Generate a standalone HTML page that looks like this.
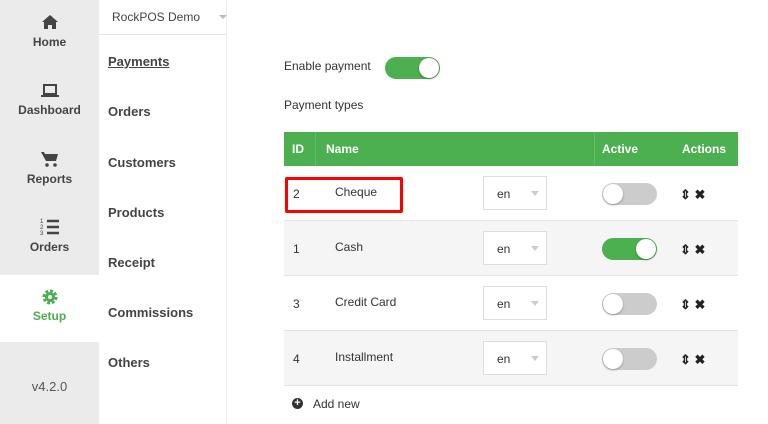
<html><head><style>
body{margin:0;width:768px;height:424px;position:relative;font-family:"Liberation Sans",sans-serif;background:#fff;overflow:hidden;color:#333}
.a{position:absolute}
.side{left:0;top:0;width:99px;height:424px;background:#ebebeb}
.ni{position:absolute;left:0;width:99px;text-align:center;font-size:12px;font-weight:bold;color:#444}
.ic{position:absolute;left:0;width:99px;text-align:center}
.col2{left:99px;top:0;width:127px;height:424px;border-right:1px solid #eee;background:#fff}
.m{position:absolute;left:9px;font-size:13px;font-weight:bold;color:#444}
.row{position:absolute;left:284px;width:454px;height:54px;border-bottom:1px solid #e4e4e4;font-size:12px}
.sel{position:absolute;left:199px;top:10px;width:64px;height:34px;border:1px solid #ddd;background:#fff;box-sizing:border-box}
.sel span{position:absolute;left:13px;top:10px;font-size:12px}
.sel i{position:absolute;left:47px;top:14px;border:4px solid transparent;border-top:5px solid #ccc;border-bottom:0}
.tg{position:absolute;left:318px;top:17px;width:55px;height:22px;border-radius:11px;background:#ccc}
.tg.on{background:#4caf50}
.tg b{position:absolute;top:1px;left:1px;width:20px;height:20px;border-radius:50%;background:#fff;box-shadow:0 1px 2px rgba(0,0,0,.3)}
.tg.on b{left:34px}
.act{position:absolute;left:396px;top:21px;font-size:13px;font-weight:bold;color:#222}
</style></head><body>
<div class="a side">
<div class="ic" style="top:14px"><svg width="18" height="16" viewBox="0 0 18 16"><path d="M9 1L1 8h2v7h4v-4h4v4h4V8h2z" fill="#444"/></svg></div>
<div class="ni" style="top:35px">Home</div>
<div class="ic" style="top:83px"><svg width="20" height="16" viewBox="0 0 20 16"><rect x="4" y="2" width="12" height="9" fill="none" stroke="#444" stroke-width="2"/><rect x="1" y="12" width="18" height="2" fill="#444"/></svg></div>
<div class="ni" style="top:103px">Dashboard</div>
<div class="ic" style="top:151px"><svg width="20" height="17" viewBox="0 0 20 17"><path d="M1 1h3l1 2h13l-2 7H6z" fill="#444"/><circle cx="7" cy="14" r="1.8" fill="#444"/><circle cx="15" cy="14" r="1.8" fill="#444"/></svg></div>
<div class="ni" style="top:172px">Reports</div>
<div class="ic" style="top:218px"><svg width="20" height="18" viewBox="0 0 20 18"><path d="M7 3h12M7 9h12M7 15h12" stroke="#444" stroke-width="2.5"/><text x="0" y="5" font-size="6" fill="#444">1</text><text x="0" y="11" font-size="6" fill="#444">2</text><text x="0" y="17" font-size="6" fill="#444">3</text></svg></div>
<div class="ni" style="top:240px">Orders</div>
<div class="a" style="left:0;top:275px;width:99px;height:67px;background:#fff"></div>
<div class="ic" style="top:289px"><svg width="16" height="16" viewBox="0 0 16 16"><circle cx="8" cy="8" r="5.5" fill="none" stroke="#4caf50" stroke-width="4" stroke-dasharray="2.6 1.7"/><circle cx="8" cy="8" r="5" fill="#4caf50"/><circle cx="8" cy="8" r="2" fill="#fff"/></svg></div>
<div class="ni" style="top:309px;color:#4caf50">Setup</div>
<div class="ni" style="top:379px;font-weight:normal;font-size:13px;color:#555">v4.2.0</div>
</div>
<div class="a col2">
<div class="a" style="left:0;top:0;width:127px;height:34px;border-bottom:1px solid #e6e6e6;font-size:12px"><span style="position:absolute;left:13px;top:10px;color:#444">RockPOS Demo</span><i style="position:absolute;left:120px;top:15px;border:4px solid transparent;border-top:4px solid #bbb"></i></div>
<div class="m" style="top:54px;text-decoration:underline">Payments</div>
<div class="m" style="top:104px">Orders</div>
<div class="m" style="top:155px">Customers</div>
<div class="m" style="top:205px">Products</div>
<div class="m" style="top:255px">Receipt</div>
<div class="m" style="top:305px">Commissions</div>
<div class="m" style="top:355px">Others</div>
</div>
<div class="a" style="left:284px;top:59px;font-size:12px">Enable payment</div>
<div class="tg on" style="left:385px;top:57px;width:55px"><b></b></div>
<div class="a" style="left:284px;top:98px;font-size:12px">Payment types</div>
<div class="a" style="left:284px;top:132px;width:454px;height:34px;background:#4caf50;color:#fff;font-size:12px;font-weight:bold">
<div class="a" style="left:31px;top:0;width:1px;height:34px;background:#66bb6a"></div>
<div class="a" style="left:310px;top:0;width:1px;height:34px;background:#66bb6a"></div>
<span class="a" style="left:8px;top:10px">ID</span><span class="a" style="left:42px;top:10px">Name</span><span class="a" style="left:318px;top:10px">Active</span><span class="a" style="left:398px;top:10px">Actions</span></div>
<div class="row" style="top:166px;background:#fff"><span class="a" style="left:9px;top:21px">2</span><span class="a" style="left:51px;top:19px">Cheque</span><div class="sel"><span>en</span><i></i></div><div class="tg"><b></b></div><div class="act">⇕ ✖</div></div>
<div class="row" style="top:221px;background:#f5f5f5"><span class="a" style="left:9px;top:21px">1</span><span class="a" style="left:51px;top:19px">Cash</span><div class="sel"><span>en</span><i></i></div><div class="tg on"><b></b></div><div class="act">⇕ ✖</div></div>
<div class="row" style="top:276px;background:#fff"><span class="a" style="left:9px;top:21px">3</span><span class="a" style="left:51px;top:19px">Credit Card</span><div class="sel"><span>en</span><i></i></div><div class="tg"><b></b></div><div class="act">⇕ ✖</div></div>
<div class="row" style="top:331px;background:#f5f5f5"><span class="a" style="left:9px;top:21px">4</span><span class="a" style="left:51px;top:19px">Installment</span><div class="sel"><span>en</span><i></i></div><div class="tg"><b></b></div><div class="act">⇕ ✖</div></div>
<div class="a" style="left:285px;top:177px;width:118px;height:36px;border:3px solid #f00;box-sizing:border-box;border-radius:2px"></div>
<div class="a" style="left:292px;top:398px;width:11px;height:11px;border-radius:50%;background:#333;color:#fff;font-size:11px;line-height:11px;text-align:center;font-weight:bold">+</div>
<div class="a" style="left:313px;top:397px;font-size:12px">Add new</div>
</body></html>
